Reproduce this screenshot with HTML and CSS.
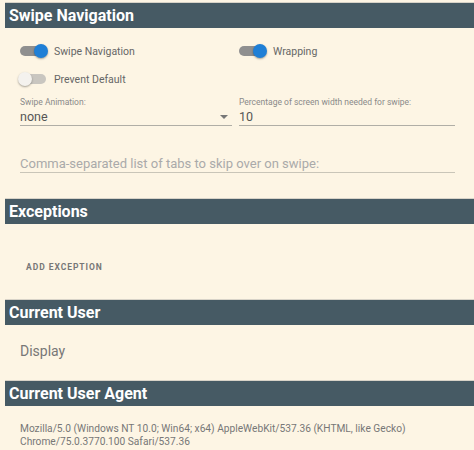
FILE: index.html
```html
<!DOCTYPE html>
<html>
<head>
<meta charset="utf-8">
<link rel="stylesheet" href="styles.css">
</head>
<body>
<section class="sec">
  <h2 class="bar">Swipe Navigation</h2>
  <div class="swipe">
    <div class="toggles">
      <label class="tg"><span class="track on"><span class="thumb"></span></span><span class="tg-label">Swipe Navigation</span></label>
      <label class="tg"><span class="track on"><span class="thumb"></span></span><span class="tg-label">Wrapping</span></label>
      <label class="tg"><span class="track"><span class="thumb"></span></span><span class="tg-label">Prevent Default</span></label>
    </div>
    <div class="fields">
      <div class="field">
        <div class="flabel">Swipe Animation:</div>
        <div class="fval"><span>none</span><span class="arrow"></span></div>
      </div>
      <div class="field">
        <div class="flabel">Percentage of screen width needed for swipe:</div>
        <div class="fval"><span>10</span></div>
      </div>
    </div>
    <div class="field wide">
      <div class="fval ph">Comma-separated list of tabs to skip over on swipe:</div>
    </div>
  </div>
</section>
<section class="sec">
  <h2 class="bar">Exceptions</h2>
  <div class="exc"><button class="btn">ADD EXCEPTION</button></div>
</section>
<section class="sec">
  <h2 class="bar">Current User</h2>
  <div class="user">Display</div>
</section>
<section class="sec">
  <h2 class="bar">Current User Agent</h2>
  <div class="ua">Mozilla/5.0 (Windows NT 10.0; Win64; x64) AppleWebKit/537.36 (KHTML, like Gecko) Chrome/75.0.3770.100 Safari/537.36</div>
</section>
</body>
</html>
```
FILE: styles.css
```css
html, body {
  margin: 0;
  padding: 0;
  background: #fdf5e4;
}
body {
  padding-top: 3px;
  font-family: Roboto, "Liberation Sans", sans-serif;
  color: #666;
}
.bar {
  margin: 0 0 0 5px;
  height: 25px;
  line-height: 25px;
  padding-left: 4px;
  background: #465a64;
  color: #fff;
  font-size: 16px;
  font-weight: 700;
  box-shadow: 0 -1px 0 #d8d3c8;
}
.swipe {
  padding: 16px 19px 26px 20px;
}
.toggles {
  display: grid;
  grid-template-columns: 219px 1fr;
  row-gap: 14px;
}
.tg {
  display: flex;
  align-items: center;
  height: 14px;
  gap: 8px;
}
.track {
  position: relative;
  width: 26px;
  height: 10px;
  border-radius: 5px;
  background: #c9c6c0;
}
.track.on {
  background: #8f8f8f;
}
.thumb {
  position: absolute;
  top: -2px;
  left: -2px;
  width: 14px;
  height: 14px;
  border-radius: 50%;
  background: #f4f2ee;
  box-shadow: 0 1px 2px rgba(0,0,0,0.35);
}
.track.on .thumb {
  left: auto;
  right: -2px;
  background: #1f7fd6;
}
.tg-label {
  font-size: 10.5px;
  color: #666;
}
.fields {
  display: grid;
  grid-template-columns: 212px 1fr;
  column-gap: 7px;
  margin-top: 11px;
}
.flabel {
  font-size: 8.5px;
  color: #8a8a8a;
  height: 11px;
  line-height: 11px;
}
.fval {
  display: flex;
  align-items: center;
  justify-content: space-between;
  height: 17px;
  font-size: 12.5px;
  color: #555;
  border-bottom: 1px solid #b0aea6;
}
.arrow {
  width: 0;
  height: 0;
  border-left: 4px solid transparent;
  border-right: 4px solid transparent;
  border-top: 4px solid #777;
  margin-right: 4px;
}
.wide {
  margin-top: 28px;
}
.ph {
  color: #aaa;
  font-size: 13px;
  height: 18px;
  border-bottom-color: #c9c5b8;
}
.exc {
  padding: 31px 0 22px 18px;
}
.btn {
  border: 0;
  background: transparent;
  font-family: Roboto, "Liberation Sans", sans-serif;
  font-size: 8.5px;
  font-weight: 700;
  letter-spacing: 0.95px;
  color: #777;
  padding: 6px 8px;
}
.user {
  padding: 17px 20px 21px;
  font-size: 14px;
  color: #777;
  line-height: 18px;
}
.ua {
  padding: 16px 50px 0 20px;
  font-size: 10.2px;
  line-height: 13px;
  color: #777;
}
```
